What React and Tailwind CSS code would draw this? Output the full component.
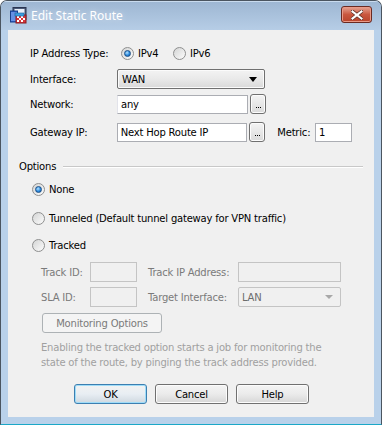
import React from "react";

const Radio = ({ checked }) => (
  <span className="w-[13px] h-[13px] rounded-full border border-[#8e8f8f] bg-linear-to-br from-[#d4d5d5] to-[#fcfcfc] flex items-center justify-center shrink-0">
    {checked && (
      <span className="w-[7px] h-[7px] rounded-full border border-[#1c4f86] bg-[radial-gradient(circle_at_40%_35%,#b6e3ff,#2b8be0_55%,#0f5aa8)]" />
    )}
  </span>
);

const Btn = ({ children, focused, className = "" }) => (
  <div
    className={
      "h-[20px] w-[73px] rounded-[3px] border flex items-center justify-center text-black " +
      (focused
        ? "border-[#3c7fb1] bg-linear-to-b from-[#f2f2f2] via-[#e8eef3] to-[#cfd8e0] shadow-[inset_0_0_0_1px_#9fdcf8] "
        : "border-[#707070] bg-linear-to-b from-[#f4f4f4] via-[#ebebeb] to-[#d6d6d6] shadow-[inset_0_0_0_1px_#fcfcfc] ") +
      className
    }
  >
    {children}
  </div>
);

const Dots = () => (
  <div className="w-[16px] h-[20px] rounded-[3px] border border-[#707070] bg-linear-to-b from-[#f4f4f4] to-[#dadada] shadow-[inset_0_0_0_1px_#fcfcfc] flex items-end justify-center pb-[5px] shrink-0">
    <span className="flex gap-[1px]">
      <span className="w-[1px] h-[1px] bg-black" />
      <span className="w-[1px] h-[1px] bg-black" />
      <span className="w-[1px] h-[1px] bg-black" />
    </span>
  </div>
);

const TitleIcon = () => (
  <svg width="17" height="17" viewBox="0 0 17 17">
    <rect x="3" y="0.5" width="13" height="12" fill="#4a5a78" stroke="#2a3450" />
    <rect x="4.5" y="2" width="10" height="9" fill="#e8eef8" />
    <rect x="0.5" y="4" width="7" height="11" fill="#2b5fc9" stroke="#1a3f8a" />
    <rect x="1.5" y="5" width="1" height="9" fill="#9fc0ff" />
    <rect x="3.5" y="5" width="1" height="9" fill="#9fc0ff" />
    <rect x="5.5" y="5" width="1" height="9" fill="#9fc0ff" />
    <rect x="6" y="8" width="10" height="8" fill="#d8363a" stroke="#8a1a1e" />
    <rect x="7" y="9" width="2" height="2" fill="#fff" />
    <rect x="11" y="9" width="2" height="2" fill="#fff" />
    <rect x="9" y="11" width="2" height="2" fill="#fff" />
    <rect x="13" y="11" width="2" height="2" fill="#fff" />
    <rect x="7" y="13" width="2" height="2" fill="#fff" />
    <rect x="11" y="13" width="2" height="2" fill="#fff" />
    <rect x="5" y="6" width="9" height="3" fill="#3a9fe0" stroke="#1a5f9a" strokeWidth="0.6" />
  </svg>
);

export default function App() {
  return (
    <div
      className="w-[382px] h-[425px] rounded-t-[7px] border border-[#4b5560] border-b-[#1aa7c7] bg-[#b9d1ea] flex flex-col overflow-hidden"
      style={{ fontFamily: '"DejaVu Sans", sans-serif' }}
    >
      {/* Title bar */}
      <div className="h-[29px] shrink-0 bg-linear-to-b from-[#9db6d2] to-[#b6cde6] flex items-center pl-[9px] pr-[9px] shadow-[inset_0_1px_0_#c9dbee]">
        <TitleIcon />
        <span
          className="ml-[4px] text-[12px] text-white"
          style={{ fontFamily: '"Noto Sans", "Open Sans", sans-serif', textShadow: "0 0 6px rgba(255,255,255,0.5)" }}
        >
          Edit Static Route
        </span>
        <div className="ml-auto mt-[-2px] w-[31px] h-[17px] rounded-[3px] border border-[#6a2a22] bg-linear-to-b from-[#e4a393] via-[#c9573f] to-[#b8442c] shadow-[inset_0_0_0_1px_#e99a88] flex items-center justify-center">
          <svg width="12" height="10" viewBox="0 0 12 10">
            <path d="M1 1 L11 9 M11 1 L1 9" stroke="#5a3028" strokeWidth="3.4" strokeLinecap="square" />
            <path d="M1.5 1.5 L10.5 8.5 M10.5 1.5 L1.5 8.5" stroke="#ffffff" strokeWidth="2.2" strokeLinecap="square" />
          </svg>
        </div>
      </div>

      {/* Content */}
      <div className="mx-[7px] h-[387px] bg-[#f0f0f0] text-[10px] tracking-[-0.2px] text-black flex flex-col">
        <div className="px-[22px] pt-[13px]">
          <div className="h-[20px] flex items-center">
            <span className="w-[91px]">IP Address Type:</span>
            <Radio checked />
            <span className="ml-[4px] w-[35px]">IPv4</span>
            <Radio />
            <span className="ml-[4px]">IPv6</span>
          </div>
          <div className="mt-[6px] h-[20px] flex items-center">
            <span className="w-[87px]">Interface:</span>
            <div className="w-[148px] h-[20px] rounded-[2px] border border-[#707070] bg-linear-to-b from-[#f3f3f3] via-[#e9e9e9] to-[#d9d9d9] shadow-[inset_0_0_0_1px_#fbfbfb] flex items-center pl-[4px] pr-[7px]">
              <span>WAN</span>
              <svg className="ml-auto" width="8" height="5" viewBox="0 0 8 5">
                <path d="M0 0 H8 L4 5 Z" fill="#000" />
              </svg>
            </div>
          </div>
          <div className="mt-[5px] h-[20px] flex items-center">
            <span className="w-[87px]">Network:</span>
            <div className="w-[131px] h-[19px] border border-[#abadb3] border-l-[#e2e3ea] border-t-[#abadb3] bg-white flex items-center pl-[3px]">
              any
            </div>
            <div className="ml-[2px]">
              <Dots />
            </div>
          </div>
          <div className="mt-[8px] h-[20px] flex items-center">
            <span className="w-[87px]">Gateway IP:</span>
            <div className="w-[131px] h-[19px] border border-[#abadb3] bg-white flex items-center pl-[3px]">
              Next Hop Route IP
            </div>
            <div className="ml-[2px]">
              <Dots />
            </div>
            <span className="ml-[12px] w-[38px]">Metric:</span>
            <div className="w-[37px] h-[19px] border border-[#abadb3] bg-white flex items-center pl-[3px]">1</div>
          </div>
        </div>

        {/* Options */}
        <div className="mt-[17px] h-[14px] px-[11px] flex items-center">
          <span>Options</span>
          <div className="ml-[7px] flex-1 h-px bg-[#c8c8c8] shadow-[0_1px_0_#ffffff]" />
        </div>

        <div className="pl-[24px]">
          <div className="mt-[8px] h-[16px] flex items-center gap-[4px]">
            <Radio checked />
            <span>None</span>
          </div>
          <div className="mt-[13px] h-[16px] flex items-center gap-[4px]">
            <Radio />
            <span>Tunneled (Default tunnel gateway for VPN traffic)</span>
          </div>
          <div className="mt-[11px] h-[16px] flex items-center gap-[4px]">
            <Radio />
            <span>Tracked</span>
          </div>
        </div>

        <div className="pl-[33px] text-[#7a7a7a]">
          <div className="mt-[9px] h-[20px] flex items-center">
            <span className="w-[49px]">Track ID:</span>
            <div className="w-[47px] h-[20px] border border-[#c4c4c4]" />
            <span className="ml-[11px] w-[90px]">Track IP Address:</span>
            <div className="w-[103px] h-[20px] border border-[#c4c4c4]" />
          </div>
          <div className="mt-[5px] h-[20px] flex items-center">
            <span className="w-[49px]">SLA ID:</span>
            <div className="w-[47px] h-[20px] border border-[#c4c4c4]" />
            <span className="ml-[11px] w-[90px]">Target Interface:</span>
            <div className="w-[103px] h-[20px] rounded-[2px] border border-[#c4c4c4] flex items-center pl-[3px] pr-[7px] text-[#6d6d6d]">
              <span>LAN</span>
              <svg className="ml-auto" width="8" height="4" viewBox="0 0 8 4">
                <path d="M0 0 H8 L4 4 Z" fill="#a8a8a8" />
              </svg>
            </div>
          </div>
          <div className="mt-[6px] ml-[1px] w-[120px] h-[20px] rounded-[3px] border border-[#adb2b5] bg-[#f4f4f4] flex items-center justify-center">
            Monitoring Options
          </div>
          <div className="mt-[7px] leading-[15px] text-[#a0a0a0]">
            Enabling the tracked option starts a job for monitoring the
            <br />
            state of the route, by pinging the track address provided.
          </div>
        </div>

        <div className="mt-[14px] flex justify-center gap-[8px] pl-[1px]">
          <Btn focused>OK</Btn>
          <Btn>Cancel</Btn>
          <Btn>Help</Btn>
        </div>
      </div>
    </div>
  );
}
